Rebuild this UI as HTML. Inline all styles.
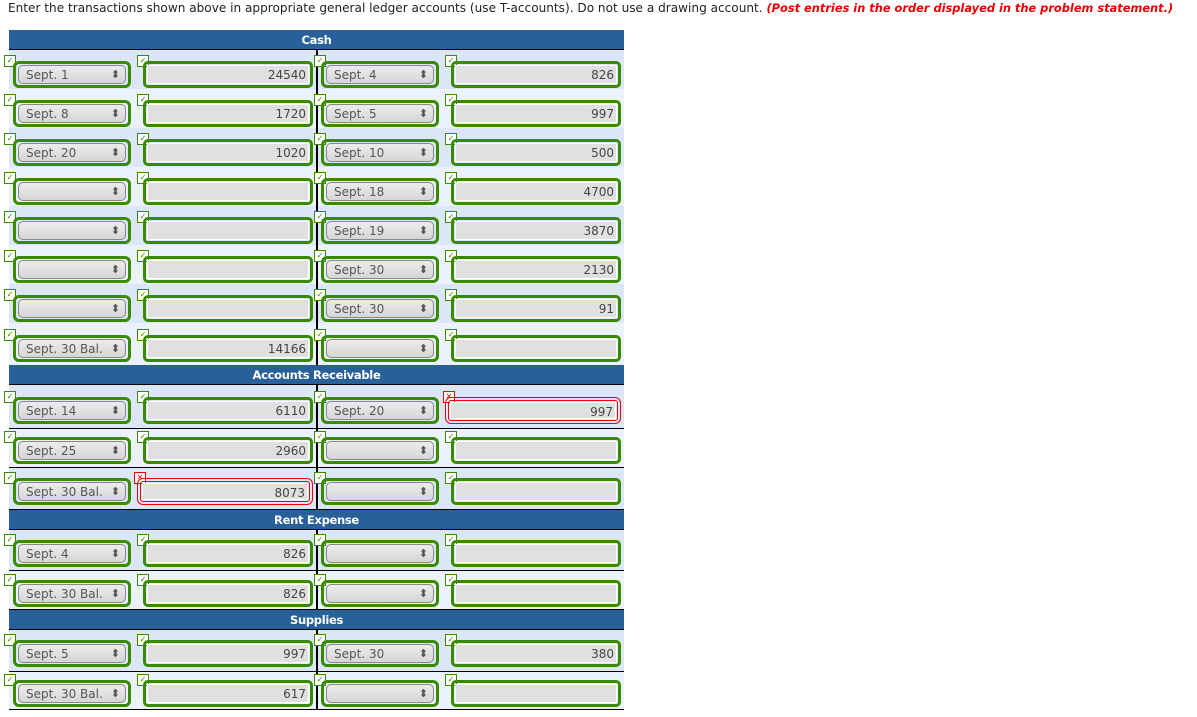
<!DOCTYPE html>
<html><head><meta charset="utf-8"><style>
body{margin:0;width:1197px;height:710px;background:#fff;font-family:"DejaVu Sans","Liberation Sans",sans-serif;position:relative;overflow:hidden}
.t{position:absolute;left:8px;top:1px;font-size:12.1px;color:#222;white-space:nowrap}
.t b{color:#e00;font-style:italic;font-size:11.4px}
.h{position:absolute;left:9px;width:615px;height:19px;background:#28609a;color:#fff;font-weight:bold;font-size:11.5px;text-align:center;line-height:20px;border-bottom:1px solid #000;letter-spacing:-0.3px}
.s{position:absolute;left:9px;width:615px}
.a{background:#dbe7f7}.b{background:#ebf2fc}
.l{border-bottom:1px solid #000}
.v{position:absolute;left:316px;width:2px;background:#000}
.r{position:absolute;left:0;width:630px;height:48px}
.c{position:absolute;top:5px;width:10px;height:10px;background:#fff;border:1px solid #3a8a00;font-size:8px;line-height:10px;text-align:center;color:#3a8a00}
.c.x{border-color:#e00;color:#e00;font-weight:bold}
.sl{position:absolute;top:11px;width:112px;height:21px;border:3px solid #3a8a00;border-radius:6px}
.sl i{position:absolute;left:2px;top:1px;right:2px;bottom:1px;border:1px solid #888;border-radius:5px;background:linear-gradient(#ececec,#d6d6d6);font-style:normal;font-size:12px;color:#555;line-height:18px;padding-left:7px;white-space:nowrap}
.sl i:after{content:"⬍";position:absolute;right:5px;top:0;font-size:11px;color:#555}
.am{position:absolute;top:11px;width:164px;height:21px;border:3px solid #3a8a00;border-radius:5px}
.am i{position:absolute;left:1px;top:1px;right:1px;bottom:1px;border:1px solid #fff;background:#e0e0e0;font-style:normal;font-size:12px;color:#444;text-align:right;line-height:18px;padding-right:2px}
.am.red{border:1px solid #e00;outline:1px solid #e00;outline-offset:-4px;height:25px;width:174px;border-radius:6px}
.am.red i{left:4px;top:4px;right:4px;bottom:4px}
</style></head><body>
<div class="t">Enter the transactions shown above in appropriate general ledger accounts (use T-accounts). Do not use a drawing account. <b>(Post entries in the order displayed in the problem statement.)</b></div>

<div class="h" style="top:30px">Cash</div>
<div class="s a" style="top:50px;height:39px"></div><div class="s b" style="top:89px;height:39px"></div><div class="s a" style="top:128px;height:39px"></div><div class="s b" style="top:167px;height:39px"></div><div class="s a" style="top:206px;height:39px"></div><div class="s b" style="top:245px;height:39px"></div><div class="s a" style="top:284px;height:39px"></div><div class="s b" style="top:323px;height:42px"></div>
<div class="h" style="top:365px">Accounts Receivable</div>
<div class="s a l" style="top:385px;height:43px"></div><div class="s b l" style="top:429px;height:38px"></div><div class="s a l" style="top:468px;height:41px"></div>
<div class="h" style="top:510px">Rent Expense</div>
<div class="s a l" style="top:530px;height:40px"></div><div class="s b l" style="top:571px;height:38px"></div>
<div class="h" style="top:610px">Supplies</div>
<div class="s a l" style="top:630px;height:41px"></div><div class="s b l" style="top:672px;height:37px"></div>
<div class="v" style="top:50px;height:315px"></div><div class="v" style="top:385px;height:125px"></div><div class="v" style="top:530px;height:80px"></div><div class="v" style="top:630px;height:80px"></div>

<div class="r" style="top:50px"><div class="c" style="left:4px">✓</div><div class="sl" style="left:13px"><i>Sept. 1</i></div><div class="c" style="left:137px">✓</div><div class="am" style="left:143px"><i>24540</i></div><div class="c" style="left:314px">✓</div><div class="sl" style="left:321px"><i>Sept. 4</i></div><div class="c" style="left:445px">✓</div><div class="am" style="left:451px"><i>826</i></div></div>
<div class="r" style="top:89px"><div class="c" style="left:4px">✓</div><div class="sl" style="left:13px"><i>Sept. 8</i></div><div class="c" style="left:137px">✓</div><div class="am" style="left:143px"><i>1720</i></div><div class="c" style="left:314px">✓</div><div class="sl" style="left:321px"><i>Sept. 5</i></div><div class="c" style="left:445px">✓</div><div class="am" style="left:451px"><i>997</i></div></div>
<div class="r" style="top:128px"><div class="c" style="left:4px">✓</div><div class="sl" style="left:13px"><i>Sept. 20</i></div><div class="c" style="left:137px">✓</div><div class="am" style="left:143px"><i>1020</i></div><div class="c" style="left:314px">✓</div><div class="sl" style="left:321px"><i>Sept. 10</i></div><div class="c" style="left:445px">✓</div><div class="am" style="left:451px"><i>500</i></div></div>
<div class="r" style="top:167px"><div class="c" style="left:4px">✓</div><div class="sl" style="left:13px"><i></i></div><div class="c" style="left:137px">✓</div><div class="am" style="left:143px"><i></i></div><div class="c" style="left:314px">✓</div><div class="sl" style="left:321px"><i>Sept. 18</i></div><div class="c" style="left:445px">✓</div><div class="am" style="left:451px"><i>4700</i></div></div>
<div class="r" style="top:206px"><div class="c" style="left:4px">✓</div><div class="sl" style="left:13px"><i></i></div><div class="c" style="left:137px">✓</div><div class="am" style="left:143px"><i></i></div><div class="c" style="left:314px">✓</div><div class="sl" style="left:321px"><i>Sept. 19</i></div><div class="c" style="left:445px">✓</div><div class="am" style="left:451px"><i>3870</i></div></div>
<div class="r" style="top:245px"><div class="c" style="left:4px">✓</div><div class="sl" style="left:13px"><i></i></div><div class="c" style="left:137px">✓</div><div class="am" style="left:143px"><i></i></div><div class="c" style="left:314px">✓</div><div class="sl" style="left:321px"><i>Sept. 30</i></div><div class="c" style="left:445px">✓</div><div class="am" style="left:451px"><i>2130</i></div></div>
<div class="r" style="top:284px"><div class="c" style="left:4px">✓</div><div class="sl" style="left:13px"><i></i></div><div class="c" style="left:137px">✓</div><div class="am" style="left:143px"><i></i></div><div class="c" style="left:314px">✓</div><div class="sl" style="left:321px"><i>Sept. 30</i></div><div class="c" style="left:445px">✓</div><div class="am" style="left:451px"><i>91</i></div></div>
<div class="r" style="top:324px"><div class="c" style="left:4px">✓</div><div class="sl" style="left:13px"><i>Sept. 30 Bal.</i></div><div class="c" style="left:137px">✓</div><div class="am" style="left:143px"><i>14166</i></div><div class="c" style="left:314px">✓</div><div class="sl" style="left:321px"><i></i></div><div class="c" style="left:445px">✓</div><div class="am" style="left:451px"><i></i></div></div>

<div class="r" style="top:386px"><div class="c" style="left:4px">✓</div><div class="sl" style="left:13px"><i>Sept. 14</i></div><div class="c" style="left:137px">✓</div><div class="am" style="left:143px"><i>6110</i></div><div class="c" style="left:314px">✓</div><div class="sl" style="left:321px"><i>Sept. 20</i></div><div class="c x" style="left:443px">✕</div><div class="am red" style="left:445px"><i>997</i></div></div>
<div class="r" style="top:426px"><div class="c" style="left:4px">✓</div><div class="sl" style="left:13px"><i>Sept. 25</i></div><div class="c" style="left:137px">✓</div><div class="am" style="left:143px"><i>2960</i></div><div class="c" style="left:314px">✓</div><div class="sl" style="left:321px"><i></i></div><div class="c" style="left:445px">✓</div><div class="am" style="left:451px"><i></i></div></div>
<div class="r" style="top:467px"><div class="c" style="left:4px">✓</div><div class="sl" style="left:13px"><i>Sept. 30 Bal.</i></div><div class="c x" style="left:134px">✕</div><div class="am red" style="left:137px"><i>8073</i></div><div class="c" style="left:314px">✓</div><div class="sl" style="left:321px"><i></i></div><div class="c" style="left:445px">✓</div><div class="am" style="left:451px"><i></i></div></div>

<div class="r" style="top:529px"><div class="c" style="left:4px">✓</div><div class="sl" style="left:13px"><i>Sept. 4</i></div><div class="c" style="left:137px">✓</div><div class="am" style="left:143px"><i>826</i></div><div class="c" style="left:314px">✓</div><div class="sl" style="left:321px"><i></i></div><div class="c" style="left:445px">✓</div><div class="am" style="left:451px"><i></i></div></div>
<div class="r" style="top:569px"><div class="c" style="left:4px">✓</div><div class="sl" style="left:13px"><i>Sept. 30 Bal.</i></div><div class="c" style="left:137px">✓</div><div class="am" style="left:143px"><i>826</i></div><div class="c" style="left:314px">✓</div><div class="sl" style="left:321px"><i></i></div><div class="c" style="left:445px">✓</div><div class="am" style="left:451px"><i></i></div></div>

<div class="r" style="top:629px"><div class="c" style="left:4px">✓</div><div class="sl" style="left:13px"><i>Sept. 5</i></div><div class="c" style="left:137px">✓</div><div class="am" style="left:143px"><i>997</i></div><div class="c" style="left:314px">✓</div><div class="sl" style="left:321px"><i>Sept. 30</i></div><div class="c" style="left:445px">✓</div><div class="am" style="left:451px"><i>380</i></div></div>
<div class="r" style="top:669px"><div class="c" style="left:4px">✓</div><div class="sl" style="left:13px"><i>Sept. 30 Bal.</i></div><div class="c" style="left:137px">✓</div><div class="am" style="left:143px"><i>617</i></div><div class="c" style="left:314px">✓</div><div class="sl" style="left:321px"><i></i></div><div class="c" style="left:445px">✓</div><div class="am" style="left:451px"><i></i></div></div>
</body></html>
